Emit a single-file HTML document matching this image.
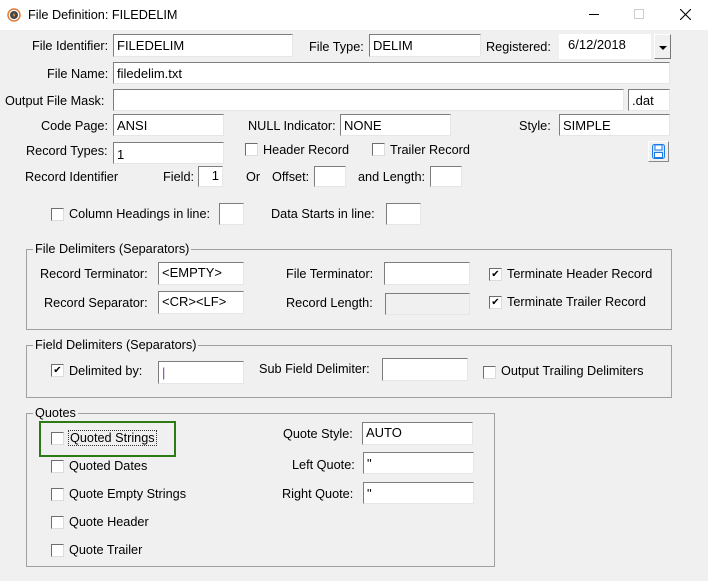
<!DOCTYPE html>
<html><head><meta charset="utf-8"><style>
*{margin:0;padding:0;box-sizing:border-box}
body{width:708px;height:581px;background:#f0f0f0;position:relative;overflow:hidden;font-family:"Liberation Sans",Arial,sans-serif;font-size:12.7px;color:#000}
.t{position:absolute;white-space:nowrap;line-height:14px}
.i{position:absolute;background:#fff;border:1px solid;border-color:#7d7d7d #e6e6e6 #e6e6e6 #7d7d7d;padding:3px 3px 0 3px;line-height:16px;white-space:nowrap;font-size:13px}
.c{position:absolute;width:13px;height:13px;background:#fff;border:1px solid;border-color:#6d6d6d #dcdcdc #dcdcdc #6d6d6d;font-size:10px;line-height:11px;text-align:center}
.g{position:absolute;border:1px solid #a0a0a0}
.lg{position:absolute;background:#f0f0f0;padding:0 2px;line-height:14px}
</style></head><body>
<div style="position:absolute;left:0;top:0;width:708px;height:30px;background:#fff"></div>
<svg style="position:absolute;left:7px;top:8px" width="14" height="14"><circle cx="7" cy="7" r="6" fill="#fff" stroke="#e07a3a" stroke-width="1.5"/><circle cx="7" cy="7" r="4" fill="#444"/><path d="M7.5 4 L5.5 7.5 H7 L6.5 10 L8.5 6.5 H7 Z" fill="#f0a040"/></svg>
<div class="t" style="left:28px;top:8px">File Definition: FILEDELIM</div>
<div style="position:absolute;left:589px;top:14px;width:10px;height:1px;background:#000"></div>
<div style="position:absolute;left:634px;top:9px;width:10px;height:10px;border:1px solid #ccc"></div>
<svg style="position:absolute;left:680px;top:9px" width="11" height="11"><path d="M0 0L11 11M11 0L0 11" stroke="#000" stroke-width="1.1"/></svg>

<div class="t" style="left:32px;top:39px">File Identifier:</div>
<div class="i" style="left:113px;top:34px;width:180px;height:23px">FILEDELIM</div>
<div class="t" style="left:309px;top:40px">File Type:</div>
<div class="i" style="left:369px;top:34px;width:112px;height:23px">DELIM</div>
<div class="t" style="left:486px;top:40px">Registered:</div>
<div class="t" style="left:559px;top:34px;width:92px;height:25px;background:#fff;padding:4px 0 0 9px;font-size:13px">6/12/2018</div>
<div style="position:absolute;left:654px;top:34px;width:17px;height:25px;background:#f0f0f0;border:1px solid;border-color:#fff #777 #777 #fff"><div style="position:absolute;left:4px;top:11px;border-left:4px solid transparent;border-right:4px solid transparent;border-top:4px solid #000"></div></div>

<div class="t" style="left:47px;top:67px">File Name:</div>
<div class="i" style="left:113px;top:62px;width:557px;height:22px">filedelim.txt</div>
<div class="t" style="left:5px;top:94px">Output File Mask:</div>
<div class="i" style="left:113px;top:89px;width:511px;height:22px"></div>
<div class="i" style="left:628px;top:89px;width:42px;height:22px">.dat</div>

<div class="t" style="left:41px;top:119px">Code Page:</div>
<div class="i" style="left:113px;top:114px;width:111px;height:22px">ANSI</div>
<div class="t" style="left:248px;top:119px">NULL Indicator:</div>
<div class="i" style="left:340px;top:114px;width:111px;height:22px">NONE</div>
<div class="t" style="left:519px;top:119px">Style:</div>
<div class="i" style="left:559px;top:114px;width:111px;height:22px">SIMPLE</div>

<div class="t" style="left:26px;top:144px">Record Types:</div>
<div class="i" style="left:113px;top:142px;width:111px;height:22px;padding-top:4px">1</div>
<div class="c" style="left:245px;top:143px"></div>
<div class="t" style="left:263px;top:143px">Header Record</div>
<div class="c" style="left:372px;top:143px"></div>
<div class="t" style="left:390px;top:143px">Trailer Record</div>
<div style="position:absolute;left:648px;top:141px;width:21px;height:21px;border:1px solid;border-color:#fff #888 #888 #fff;background:#f0f0f0"><svg style="position:absolute;left:3px;top:2px" width="13" height="15"><rect x="0.5" y="0.5" width="12" height="14" rx="2" fill="#cfe6ff" stroke="#1e7be6"/><rect x="3" y="1" width="7" height="5" fill="#fff" stroke="#1e7be6"/><rect x="2.5" y="8.5" width="8" height="5" fill="#fff" stroke="#1e7be6"/></svg></div>

<div class="t" style="left:25px;top:170px">Record Identifier</div>
<div class="t" style="left:163px;top:170px">Field:</div>
<div class="i" style="left:198px;top:166px;width:25px;height:21px;text-align:right;padding-top:1px">1</div>
<div class="t" style="left:246px;top:170px">Or</div>
<div class="t" style="left:272px;top:170px">Offset:</div>
<div class="i" style="left:314px;top:166px;width:32px;height:21px"></div>
<div class="t" style="left:358px;top:170px">and Length:</div>
<div class="i" style="left:430px;top:166px;width:32px;height:21px"></div>

<div class="c" style="left:51px;top:208px"></div>
<div class="t" style="left:69px;top:207px">Column Headings in line:</div>
<div class="i" style="left:219px;top:203px;width:25px;height:22px"></div>
<div class="t" style="left:271px;top:207px">Data Starts in line:</div>
<div class="i" style="left:386px;top:203px;width:35px;height:22px"></div>

<div class="g" style="left:26px;top:249px;width:646px;height:81px"></div>
<div class="lg" style="left:33px;top:242px">File Delimiters (Separators)</div>
<div class="t" style="left:40px;top:267px">Record Terminator:</div>
<div class="i" style="left:158px;top:262px;width:86px;height:23px;padding-top:2px">&lt;EMPTY&gt;</div>
<div class="t" style="left:286px;top:267px">File Terminator:</div>
<div class="i" style="left:384px;top:262px;width:86px;height:23px"></div>
<div class="c" style="left:489px;top:268px">✔</div>
<div class="t" style="left:507px;top:267px">Terminate Header Record</div>
<div class="t" style="left:44px;top:296px">Record Separator:</div>
<div class="i" style="left:158px;top:291px;width:86px;height:23px;padding-top:2px">&lt;CR&gt;&lt;LF&gt;</div>
<div class="t" style="left:286px;top:296px">Record Length:</div>
<div class="i" style="left:385px;top:293px;width:85px;height:22px;background:#f0f0f0"></div>
<div class="c" style="left:489px;top:296px">✔</div>
<div class="t" style="left:507px;top:295px">Terminate Trailer Record</div>

<div class="g" style="left:26px;top:345px;width:646px;height:53px"></div>
<div class="lg" style="left:33px;top:338px">Field Delimiters (Separators)</div>
<div class="c" style="left:51px;top:364px">✔</div>
<div class="t" style="left:69px;top:364px">Delimited by:</div>
<div class="i" style="left:158px;top:361px;width:86px;height:23px;color:#8040a0">|</div>
<div class="t" style="left:259px;top:362px">Sub Field Delimiter:</div>
<div class="i" style="left:382px;top:358px;width:86px;height:23px"></div>
<div class="c" style="left:483px;top:366px"></div>
<div class="t" style="left:501px;top:364px">Output Trailing Delimiters</div>

<div class="g" style="left:26px;top:413px;width:469px;height:154px"></div>
<div class="lg" style="left:33px;top:406px">Quotes</div>
<div style="position:absolute;left:39px;top:421px;width:137px;height:36px;border:2px solid #2e7a14"></div>
<div class="c" style="left:51px;top:432px"></div>
<div class="t" style="left:68px;top:430px;border:1px dotted #333;padding:0 1px">Quoted Strings</div>
<div class="c" style="left:51px;top:460px"></div>
<div class="t" style="left:69px;top:459px">Quoted Dates</div>
<div class="c" style="left:51px;top:488px"></div>
<div class="t" style="left:69px;top:487px">Quote Empty Strings</div>
<div class="c" style="left:51px;top:516px"></div>
<div class="t" style="left:69px;top:515px">Quote Header</div>
<div class="c" style="left:51px;top:544px"></div>
<div class="t" style="left:69px;top:543px">Quote Trailer</div>
<div class="t" style="left:283px;top:427px">Quote Style:</div>
<div class="i" style="left:362px;top:422px;width:111px;height:23px;padding-top:2px">AUTO</div>
<div class="t" style="left:292px;top:458px">Left Quote:</div>
<div class="i" style="left:363px;top:452px;width:111px;height:22px">"</div>
<div class="t" style="left:282px;top:487px">Right Quote:</div>
<div class="i" style="left:363px;top:482px;width:111px;height:22px">"</div>
</body></html>
